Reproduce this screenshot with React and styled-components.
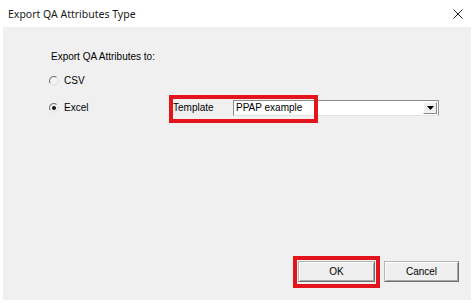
import React from "react";
import styled, { createGlobalStyle } from "styled-components";

const Global = createGlobalStyle`
  html, body { margin: 0; padding: 0; background: #ffffff; }
  body { width: 474px; height: 303px; overflow: hidden; }
  #root { width: 474px; height: 303px; }
`;

const Window = styled.div`
  width: 474px;
  height: 303px;
  background: #ffffff;
  display: flex;
  flex-direction: column;
  box-sizing: border-box;
`;

const TitleBar = styled.div`
  height: 27px;
  flex: none;
  display: flex;
  align-items: center;
  justify-content: space-between;
  padding: 0 11px 0 8px;
  box-sizing: border-box;
`;

const Title = styled.div`
  font-family: "Noto Sans", "Open Sans", sans-serif;
  font-size: 10.5px;
  color: #1a1a1a;
  line-height: 14px;
  margin-top: 1px;
`;

const CloseIcon = styled.svg`
  width: 10px;
  height: 10px;
  display: block;
`;

const Body = styled.div`
  flex: 1;
  margin: 0 3px 3px 3px;
  background: #f0f0f0;
  display: flex;
  flex-direction: column;
  padding: 24px 12px 18px 46px;
  box-sizing: border-box;
  font-family: "Liberation Sans", Arial, sans-serif;
  font-size: 10px;
  color: #000;
`;

const Heading = styled.div`
  height: 12px;
  line-height: 12px;
  margin-left: 2px;
`;

const Row = styled.div`
  display: flex;
  align-items: center;
  height: 16px;
  margin-top: ${(p) => p.$gap}px;
`;

const RadioOption = styled.label`
  display: flex;
  align-items: center;
  gap: 5px;
  width: ${(p) => (p.$width ? `${p.$width}px` : "auto")};
  flex: none;
  line-height: 12px;
`;

const RadioSvg = styled.svg`
  width: 10px;
  height: 10px;
  display: block;
  flex: none;
`;

const Annotated = styled.div`
  position: relative;
  display: flex;
  align-items: center;
`;

const Highlight = styled.div`
  position: absolute;
  top: ${(p) => p.$top}px;
  left: ${(p) => p.$left}px;
  right: ${(p) => p.$right}px;
  bottom: ${(p) => p.$bottom}px;
  border: 4px solid #e3141c;
  pointer-events: none;
`;

const FieldLabel = styled.div`
  width: 60px;
  line-height: 12px;
`;

const Combo = styled.div`
  width: 206px;
  height: 16px;
  box-sizing: border-box;
  background: #ffffff;
  border-top: 1px solid #8a8a8a;
  border-left: 1px solid #8a8a8a;
  border-right: 1px solid #9a9a9a;
  border-bottom: 1px solid #e4e4e4;
  display: flex;
  align-items: center;
`;

const ComboText = styled.div`
  flex: 1;
  padding-left: 2px;
  line-height: 12px;
`;

const DropButton = styled.div`
  width: 14px;
  height: 12px;
  margin-right: 1px;
  background: #f0f0f0;
  border-top: 1px solid #ffffff;
  border-left: 1px solid #ffffff;
  border-right: 1px solid #8a8a8a;
  border-bottom: 1px solid #8a8a8a;
  box-sizing: border-box;
  display: flex;
  align-items: center;
  justify-content: center;
`;

const Spacer = styled.div`
  flex: 1;
`;

const ButtonRow = styled.div`
  display: flex;
  justify-content: flex-end;
  gap: 9px;
`;

const Button = styled.div`
  width: ${(p) => p.$width}px;
  height: 21px;
  box-sizing: border-box;
  background: #efefef;
  border-top: 1px solid #b4b4b4;
  border-left: 1px solid #b4b4b4;
  border-right: 1px solid #6e6e6e;
  border-bottom: 1px solid #6e6e6e;
  box-shadow: inset 1px 1px 0 #ffffff, inset -1px -1px 0 #a8a8a8;
  display: flex;
  align-items: center;
  justify-content: center;
  line-height: 12px;
`;

const Radio = ({ checked }) => (
  <RadioSvg viewBox="0 0 10 10">
    <circle cx="5" cy="5" r="4.5" fill="#f4f4f4" />
    <path d="M1.3 7.2 A4.3 4.3 0 0 1 7.6 1.5" fill="none" stroke="#7a7a7a" strokeWidth="1.1" />
    <path d="M8.6 2.9 A4.3 4.3 0 0 1 2.8 8.7" fill="none" stroke="#dcdcdc" strokeWidth="1" />
    {checked && <circle cx="5" cy="5" r="2" fill="#111" />}
  </RadioSvg>
);

export default function App() {
  return (
    <>
      <Global />
      <Window>
        <TitleBar>
          <Title>Export QA Attributes Type</Title>
          <CloseIcon viewBox="0 0 10 10">
            <path d="M0.5 0.5 L9.5 9.5 M9.5 0.5 L0.5 9.5" stroke="#222" strokeWidth="1" fill="none" />
          </CloseIcon>
        </TitleBar>
        <Body>
          <Heading>Export QA Attributes to:</Heading>
          <Row $gap={10}>
            <RadioOption>
              <Radio />
              <span>CSV</span>
            </RadioOption>
          </Row>
          <Row $gap={11}>
            <RadioOption $width={124}>
              <Radio checked />
              <span>Excel</span>
            </RadioOption>
            <Annotated>
              <FieldLabel>Template</FieldLabel>
              <Combo>
                <ComboText>PPAP example</ComboText>
                <DropButton>
                  <svg width="7" height="4" viewBox="0 0 7 4">
                    <path d="M0 0 H7 L3.5 4 Z" fill="#000" />
                  </svg>
                </DropButton>
              </Combo>
              <Highlight $top={-5} $left={-4} $right={121} $bottom={-7} />
            </Annotated>
          </Row>
          <Spacer />
          <ButtonRow>
            <Annotated>
              <Button $width={77}>OK</Button>
              <Highlight $top={-5} $left={-5} $right={-5} $bottom={-6} />
            </Annotated>
            <Button $width={75}>Cancel</Button>
          </ButtonRow>
        </Body>
      </Window>
    </>
  );
}
